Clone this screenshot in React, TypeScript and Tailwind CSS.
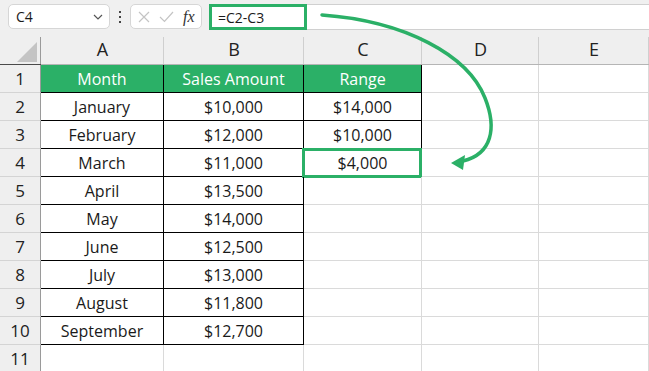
import React from 'react';

type Row = { n: number; a?: string; b?: string; c?: string };

const rows: Row[] = [
  { n: 1, a: 'Month', b: 'Sales Amount', c: 'Range' },
  { n: 2, a: 'January', b: '$10,000', c: '$14,000' },
  { n: 3, a: 'February', b: '$12,000', c: '$10,000' },
  { n: 4, a: 'March', b: '$11,000', c: '$4,000' },
  { n: 5, a: 'April', b: '$13,500' },
  { n: 6, a: 'May', b: '$14,000' },
  { n: 7, a: 'June', b: '$12,500' },
  { n: 8, a: 'July', b: '$13,000' },
  { n: 9, a: 'August', b: '$11,800' },
  { n: 10, a: 'September', b: '$12,700' },
  { n: 11 },
];

const GREEN = '#2bb067';

export default function App() {
  return (
    <div
      className="relative w-[649px] h-[371px] overflow-hidden bg-white text-[#1a1a1a]"
      style={{ fontFamily: '"Open Sans", "Noto Sans", sans-serif' }}
    >
      {/* formula bar */}
      <div className="flex items-start h-[30px] bg-[#f0f0f0] pt-[4px]">
        <div className="ml-[8px] w-[102px] h-[25px] flex items-center justify-between rounded-[5px] border border-[#d6d6d6] bg-white pl-[7px] pr-[6px]">
          <span className="text-[14px]">C4</span>
          <svg width="10" height="6" viewBox="0 0 10 6" className="mt-[1px]">
            <path d="M1 1 L5 5 L9 1" stroke="#555" strokeWidth="1.2" fill="none" />
          </svg>
        </div>
        <div className="w-[20px] h-[25px] flex flex-col items-center justify-center gap-[3px]">
          <span className="block w-[2px] h-[2px] bg-[#444]" />
          <span className="block w-[2px] h-[2px] bg-[#444]" />
          <span className="block w-[2px] h-[2px] bg-[#444]" />
        </div>
        <div className="w-[72px] h-[25px] flex items-center rounded-[5px] border border-[#d6d6d6] bg-white pl-[7px] gap-[9px]">
          <svg width="12" height="12" viewBox="0 0 12 12">
            <path d="M1 1 L11 11 M11 1 L1 11" stroke="#c4c4c4" strokeWidth="1.2" />
          </svg>
          <svg width="15" height="12" viewBox="0 0 15 12">
            <path d="M1 6 L5.5 10.5 L14 1" stroke="#c4c4c4" strokeWidth="1.2" fill="none" />
          </svg>
          <span
            className="italic text-[16px] leading-none text-[#333]"
            style={{ fontFamily: '"Liberation Serif", serif' }}
          >
            fx
          </span>
        </div>
        <div className="flex-1 ml-[7px] h-[26px] flex bg-white border-y border-[#d0d0d0]">
          <div className="w-[98px] -my-px h-[26px] border-[3px] border-[#2bb067] flex items-center pl-[6px] text-[14px]">
            =C2-C3
          </div>
        </div>
      </div>

      {/* column headers */}
      <div className="flex h-[35px] bg-[#efefef]">
        <div className="relative w-[41px] h-full border-b border-[#4a4a4a]">
          <div className="absolute right-0 top-[7px] bottom-0 w-px bg-[#9a9a9a]" />
          <svg width="20" height="20" viewBox="0 0 20 20" className="absolute left-[17px] top-[12px]">
            <polygon points="20,0 20,20 0,20" fill="#c4c4c4" />
          </svg>
        </div>
        {[
          ['A', 'w-[123px]'],
          ['B', 'w-[140px]'],
          ['C', 'w-[118px]'],
          ['D', 'w-[117px]'],
          ['E', 'flex-1'],
        ].map(([k, w]) => (
          <div key={k} className={`relative ${w} h-full border-b border-[#b5b5b5] flex items-end justify-center pb-[2px]`}>
            <div className="absolute right-0 top-[7px] bottom-0 w-px bg-[#cfcfcf]" />
            <span className="text-[18px] leading-[25px] text-[#222]">{k}</span>
          </div>
        ))}
      </div>

      {/* grid */}
      {rows.map((r) => {
        const head = r.n === 1;
        const abBlack = r.n <= 10;
        const cBlack = r.n <= 4;
        return (
          <div key={r.n} className="flex h-[28px]">
            <div className="w-[41px] shrink-0 flex items-center justify-center bg-[#efefef] border-r border-b border-r-[#9a9a9a] border-b-[#d4d4d4] text-[17px] text-[#222]">
              {r.n}
            </div>
            <Cell w="w-[123px]" black={abBlack} head={head} text={r.a} />
            <Cell w="w-[140px]" black={abBlack} head={head} text={r.b} />
            <Cell w="w-[118px]" black={cBlack} head={head} text={r.c} selected={r.n === 4} />
            <Cell w="w-[117px]" black={false} head={false} />
            <Cell w="flex-1" black={false} head={false} />
          </div>
        );
      })}

      {/* arrow */}
      <svg className="absolute inset-0 pointer-events-none" width="649" height="371" viewBox="0 0 649 371">
        <path
          d="M322 15 C 405 21, 468 55, 485 98 C 497 128, 492 154, 463 161"
          stroke={GREEN}
          strokeWidth="3.5"
          fill="none"
          strokeLinecap="round"
        />
        <polygon points="451,163 465,155 463,170" fill={GREEN} />
      </svg>
    </div>
  );
}

function Cell({
  w,
  black,
  head,
  text,
  selected,
}: {
  w: string;
  black: boolean;
  head: boolean;
  text?: string;
  selected?: boolean;
}) {
  return (
    <div
      className={`relative ${w} shrink-0 flex items-center justify-center border-r border-b text-[16px] ${
        black ? 'border-black' : 'border-[#dadada]'
      } ${head ? 'bg-[#2bb067] text-white' : ''}`}
    >
      {text}
      {selected && (
        <div className="absolute -left-[2px] -right-[1px] -top-[1px] -bottom-[2px] border-[3px] border-[#2bb067]" />
      )}
    </div>
  );
}
